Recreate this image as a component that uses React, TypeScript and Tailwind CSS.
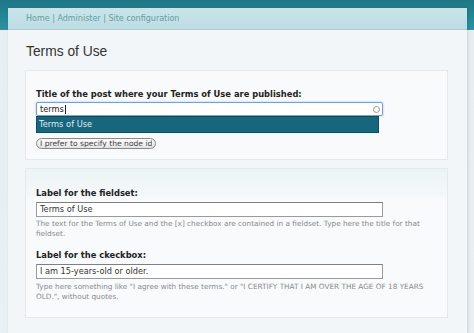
import React from 'react';

const sans = 'font-["DejaVu_Sans",Verdana,sans-serif]';

export default function App() {
  return (
    <div className="min-h-[333px] w-[474px] overflow-hidden bg-[linear-gradient(to_bottom,#1d7786_0px,#2a94a1_30px,#e7eef1_30px,#e9f0f3_100%)] pt-2">
      {/* ───── PANEL ───── */}
      <div className="ml-2 w-[459px] bg-[#f2f6f8] shadow-[1px_0_3px_rgba(0,0,0,0.12)] min-h-[325px] pb-4">
        <div className={`h-[22px] flex items-center pl-[18px] bg-[linear-gradient(to_bottom,#c9e5ea,#bcdde3)] border-b border-[#a9cbd2] text-[8px] text-[#6b9aa5] ${sans}`}>
          Home | Administer | Site configuration
        </div>

        <h1 className='pl-[18px] pt-[14px] font-["Liberation_Sans",Arial,sans-serif] text-[13.8px] leading-[16px] text-[#333]'>
          Terms of Use
        </h1>

        {/* ───── FIELDSET 1 ───── */}
        <fieldset className={`ml-[17px] mt-[10px] w-[423px] h-[90px] border border-[#e3eaed] bg-[#f8fafb] px-[10px] pt-[17px] ${sans}`}>
          <label className="block text-[8.35px] leading-[12px] font-bold text-[#222]">
            Title of the post where your Terms of Use are published:
          </label>
          <div className="relative mt-[2px] w-[347px]">
            <div className="h-[14px] flex items-center justify-between border border-[#7c9fd3] rounded-[2px] bg-white pl-[3px] pr-[2px] shadow-[0_0_2px_#9ab7e3]">
              <span className="text-[8.2px] text-[#222] leading-none">
                terms<span className="inline-block w-px h-[9px] bg-[#222] align-middle ml-px" />
              </span>
              <span className="w-[7px] h-[7px] rounded-full border border-[#9a9a9a]" />
            </div>
            <div className="absolute left-0 top-[14px] w-[343px] h-[17px] bg-[#17667e] border border-[#0f4d60] flex items-center pl-[2px] text-[8.3px] text-[#dceff4] z-10">
              Terms of Use
            </div>
            <p className="text-[7.3px] leading-[10px] text-[#888] mt-[2px]">
              Type here the title of the post (page or story) where the text of the Terms of Use is published.
            </p>
          </div>
          <button className="mt-[10px] h-[11px] px-[3px] rounded-full border border-[#8a8a8a] bg-[linear-gradient(to_bottom,#ffffff,#e6e6e6)] text-[7.6px] leading-none text-[#444] shadow-[inset_0_0_1px_#bbb]">
            I prefer to specify the node id
          </button>
        </fieldset>

        {/* ───── FIELDSET 2 ───── */}
        <fieldset className={`ml-[17px] mt-[8px] w-[423px] h-[150px] border border-[#e3eaed] bg-[linear-gradient(to_bottom,#edf3f6_0px,#f3f7f9_24px,#f8fafb_30px)] px-[10px] pt-[18px] ${sans}`}>
          <label className="block text-[8.35px] leading-[12px] font-bold text-[#222]">
            Label for the fieldset:
          </label>
          <div className="mt-[3px] w-[347px] h-[15px] flex items-center border border-[#9a9a9a] border-t-[#7f7f7f] bg-white pl-[3px] text-[8.2px] text-[#333]">
            Terms of Use
          </div>
          <p className="mt-[2px] text-[7.3px] leading-[10px] text-[#8a8a8a]">
            The text for the Terms of Use and the [x] checkbox are contained in a fieldset. Type here the title for that fieldset.
          </p>

          <label className="block mt-[10px] text-[8.35px] leading-[12px] font-bold text-[#222]">
            Label for the ckeckbox:
          </label>
          <div className="mt-[3px] w-[347px] h-[15px] flex items-center border border-[#9a9a9a] border-t-[#7f7f7f] bg-white pl-[3px] text-[8.2px] text-[#333]">
            I am 15-years-old or older.
          </div>
          <p className="mt-[3px] text-[7.3px] leading-[10px] text-[#8a8a8a]">
            Type here something like "I agree with these terms." or "I CERTIFY THAT I AM OVER THE AGE OF 18 YEARS OLD.", without quotes.
          </p>
        </fieldset>
      </div>
    </div>
  );
}
